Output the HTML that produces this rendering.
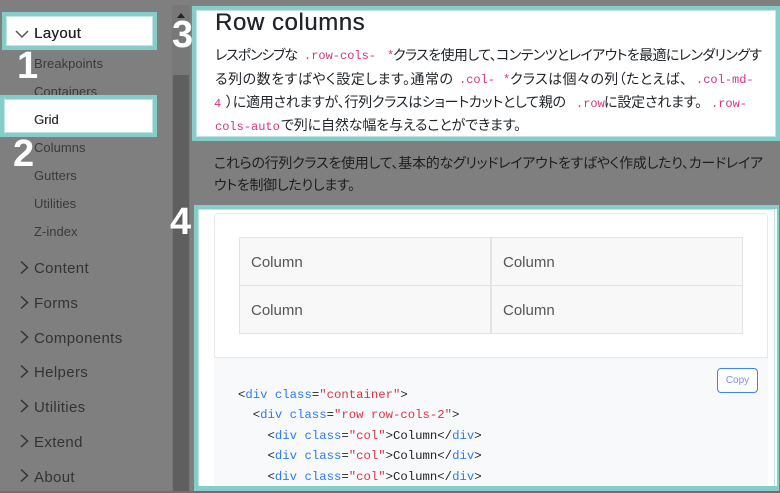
<!DOCTYPE html>
<html>
<head>
<meta charset="utf-8">
<style>
html,body{margin:0;padding:0;background:#7f7f7f;}
#p{position:relative;width:780px;height:493px;overflow:hidden;background:#7f7f7f;font-family:"Liberation Sans","Noto Sans CJK JP",sans-serif;}
#p div,#p svg{position:absolute;}
.t{white-space:nowrap;}
.s{font-size:13px;color:#3a3a3a;left:34px;line-height:18px;letter-spacing:.03px;}
.h{font-size:15px;color:#333;left:34px;line-height:20px;letter-spacing:.35px;}
.b{box-sizing:border-box;border:4px solid #84cdc8;background:#fff;outline:1px solid #bfe6e3;outline-offset:-5px;}
.c{font-family:"Liberation Mono",monospace;font-size:12.3px;left:238px;line-height:20px;white-space:pre;color:#212529;}
.c i{font-style:normal;color:#2b7bf0;}
.c u{text-decoration:none;color:#dc3545;}
.n{color:#fff;font-weight:bold;font-size:38px;line-height:40px;font-family:"Liberation Sans",sans-serif;}
.cell{box-sizing:border-box;background:#f8f8f8;border:1px solid #e3e3e3;font-size:15px;color:#555;line-height:47px;padding-left:11px;}
svg text{font-family:"Liberation Sans","Noto Sans CJK JP",sans-serif;font-size:14px;fill:#212529;font-feature-settings:"palt";}
svg text.m{font-family:"Liberation Mono",monospace;font-size:12px;fill:#d63384;font-feature-settings:normal;}
</style>
</head>
<body>
<div id="p">
  <div style="left:172px;top:5px;width:18px;height:488px;background:#787878"></div>
  <div style="left:173px;top:75px;width:16px;height:418px;background:#5f5f5f"></div>
  <svg style="left:177px;top:13px" width="8" height="5"><path d="M0 5L4 0L8 5Z" fill="#222"/></svg>

  <div class="t s" style="top:55px">Breakpoints</div>
  <div class="t s" style="top:83px">Containers</div>
  <div class="t s" style="top:139px">Columns</div>
  <div class="t s" style="top:167px">Gutters</div>
  <div class="t s" style="top:195px">Utilities</div>
  <div class="t s" style="top:223px">Z-index</div>

  <div class="t h" style="top:259px">Content</div>
  <div class="t h" style="top:294px">Forms</div>
  <div class="t h" style="top:329px">Components</div>
  <div class="t h" style="top:363px">Helpers</div>
  <div class="t h" style="top:398px">Utilities</div>
  <div class="t h" style="top:433px">Extend</div>
  <div class="t h" style="top:468px">About</div>
  <svg style="left:19px;top:260px" width="11" height="226" fill="none" stroke="#333" stroke-width="1.5">
    <path d="M2 1.5L8.5 7.5L2 13.5"/><path d="M2 36.5L8.5 42.5L2 48.5"/><path d="M2 71L8.5 77L2 83"/><path d="M2 105.5L8.5 111.5L2 117.5"/><path d="M2 140L8.5 146L2 152"/><path d="M2 175L8.5 181L2 187"/><path d="M2 209.5L8.5 215.5L2 221.5"/>
  </svg>

  <div class="b" style="left:2px;top:12px;width:155px;height:38px"></div>
  <svg style="left:15px;top:30px" width="14" height="9" fill="none" stroke="#555" stroke-width="1.5"><path d="M1 1L7 7L13 1"/></svg>
  <div class="t h" style="top:24px;color:#222;text-shadow:.3px 0 0 #222">Layout</div>

  <div class="b" style="left:0;top:95px;width:157px;height:42px"></div>
  <div class="t s" style="top:111px;color:#333;text-shadow:.2px 0 0 #333">Grid</div>

  <div class="b" style="left:192px;top:6px;width:588px;height:135px"></div>
  <div class="t" style="left:215px;top:8px;font-size:24px;line-height:30px;color:#212529;letter-spacing:.55px;text-shadow:.3px 0 0 #212529">Row columns</div>

  <div class="b" style="left:194px;top:205px;width:585px;height:286px;border-right-width:2px"></div>
  <div style="left:214px;top:213px;width:554px;height:145px;box-sizing:border-box;border:1px solid #e9e9ec;border-radius:4px 4px 0 0;background:#fff"></div>
  <div class="cell t" style="left:239px;top:237px;width:252px;height:49px;padding-top:1px">Column</div>
  <div class="cell t" style="left:491px;top:237px;width:252px;height:49px;padding-top:1px">Column</div>
  <div class="cell t" style="left:239px;top:285px;width:252px;height:49px;padding-top:1px">Column</div>
  <div class="cell t" style="left:491px;top:285px;width:252px;height:49px;padding-top:1px">Column</div>
  <div style="left:214px;top:358px;width:554px;height:128px;background:#f8f9fa"></div>
  <div class="t" style="left:717px;top:368px;width:41px;height:25px;box-sizing:border-box;border:1px solid #3f84f5;border-radius:4px;background:#fff;color:#7d8cf5;font-size:10px;line-height:24px;text-align:center">Copy</div>
  <div class="c" style="top:385px">&lt;<i>div</i> <i>class</i>=<u>"container"</u>&gt;</div>
  <div class="c" style="top:405px">  &lt;<i>div</i> <i>class</i>=<u>"row row-cols-2"</u>&gt;</div>
  <div class="c" style="top:426px">    &lt;<i>div</i> <i>class</i>=<u>"col"</u>&gt;Column&lt;/<i>div</i>&gt;</div>
  <div class="c" style="top:446px">    &lt;<i>div</i> <i>class</i>=<u>"col"</u>&gt;Column&lt;/<i>div</i>&gt;</div>
  <div class="c" style="top:467px">    &lt;<i>div</i> <i>class</i>=<u>"col"</u>&gt;Column&lt;/<i>div</i>&gt;</div>
  <div style="left:194px;top:486px;width:585px;height:4px;background:#84cdc8"></div>
  <div style="left:0;top:491px;width:780px;height:2px;background:#6f6f6f"></div>

  <svg style="left:0;top:0" width="780" height="493">
    <text x="215" y="60" textLength="83" lengthAdjust="spacing">レスポンシブな</text>
    <text class="m" x="304" y="59">.row-cols-</text>
    <text class="m" x="387" y="59">*</text>
    <text x="393" y="60" textLength="369" lengthAdjust="spacing">クラスを使用して、コンテンツとレイアウトを最適にレンダリングす</text>

    <text x="215" y="84" textLength="238" lengthAdjust="spacing">る列の数をすばやく設定します。通常の</text>
    <text class="m" x="459" y="83">.col-</text>
    <text class="m" x="503" y="83">*</text>
    <text x="510" y="84" textLength="177" lengthAdjust="spacing">クラスは個々の列（たとえば、</text>
    <text class="m" x="696" y="83">.col-md-</text>

    <text class="m" x="214" y="107">4</text>
    <text x="226" y="107" textLength="340" lengthAdjust="spacing">）に適用されますが、行列クラスはショートカットとして親の</text>
    <text class="m" x="576" y="107">.row</text>
    <text x="604" y="107" textLength="98" lengthAdjust="spacing">に設定されます。</text>
    <text class="m" x="711" y="107">.row-</text>

    <text class="m" x="215" y="130">cols-auto</text>
    <text x="281" y="130" textLength="240" lengthAdjust="spacing">で列に自然な幅を与えることができます。</text>

    <text x="214" y="168" textLength="549" lengthAdjust="spacing" style="fill:#1e1e1e">これらの行列クラスを使用して、基本的なグリッドレイアウトをすばやく作成したり、カードレイア</text>
    <text x="214" y="190" textLength="141" lengthAdjust="spacing" style="fill:#1e1e1e">ウトを制御したりします。</text>
  </svg>

  <div class="n" style="left:17px;top:46px">1</div>
  <div class="n" style="left:13px;top:134px">2</div>
  <div class="n" style="left:172px;top:15px">3</div>
  <div class="n" style="left:170px;top:202px">4</div>
</div>
</body>
</html>
